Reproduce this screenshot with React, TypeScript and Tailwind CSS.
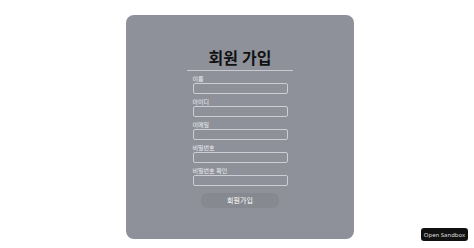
import React from "react";

const fields = [
  { label: "이름", type: "text" },
  { label: "아이디", type: "text" },
  { label: "이메일", type: "email" },
  { label: "비밀번호", type: "password" },
  { label: "비밀번호 확인", type: "password" },
];

export default function App() {
  return (
    <div
      className="relative w-[474px] h-[248px] bg-white flex justify-center pt-[15px] pl-[6px]"
      style={{ fontFamily: '"Noto Sans", "Noto Sans CJK KR", sans-serif' }}
    >
      <div className="w-[228px] h-[224px] rounded-lg bg-[#8f919a] flex flex-col items-center pt-[32px]">
        <h1 className="text-[16px] leading-[22px] font-bold text-[#111]">
          회원 가입
        </h1>
        <div className="w-[106px] h-px bg-[#c9cad0] mt-[1px]" />
        <form className="w-[95px] flex flex-col gap-[5px] mt-[5px]">
          {fields.map((f) => (
            <label key={f.label} className="flex flex-col">
              <span className="text-[6px] leading-[7px] text-[#eceef2]">
                {f.label}
              </span>
              <input
                type={f.type}
                className="h-[11px] w-full rounded-[2px] border border-[#cdced4] bg-transparent outline-none"
              />
            </label>
          ))}
        </form>
        <button
          type="button"
          className="mt-[7px] w-[78px] h-[15px] rounded-md bg-[#878990] text-[7px] leading-none text-white"
        >
          회원가입
        </button>
      </div>
      <button
        type="button"
        className="absolute right-[6px] bottom-[7px] w-[47px] h-[13px] rounded-[3px] bg-[#111] text-[6px] leading-none text-[#ddd]"
      >
        Open Sandbox
      </button>
    </div>
  );
}
